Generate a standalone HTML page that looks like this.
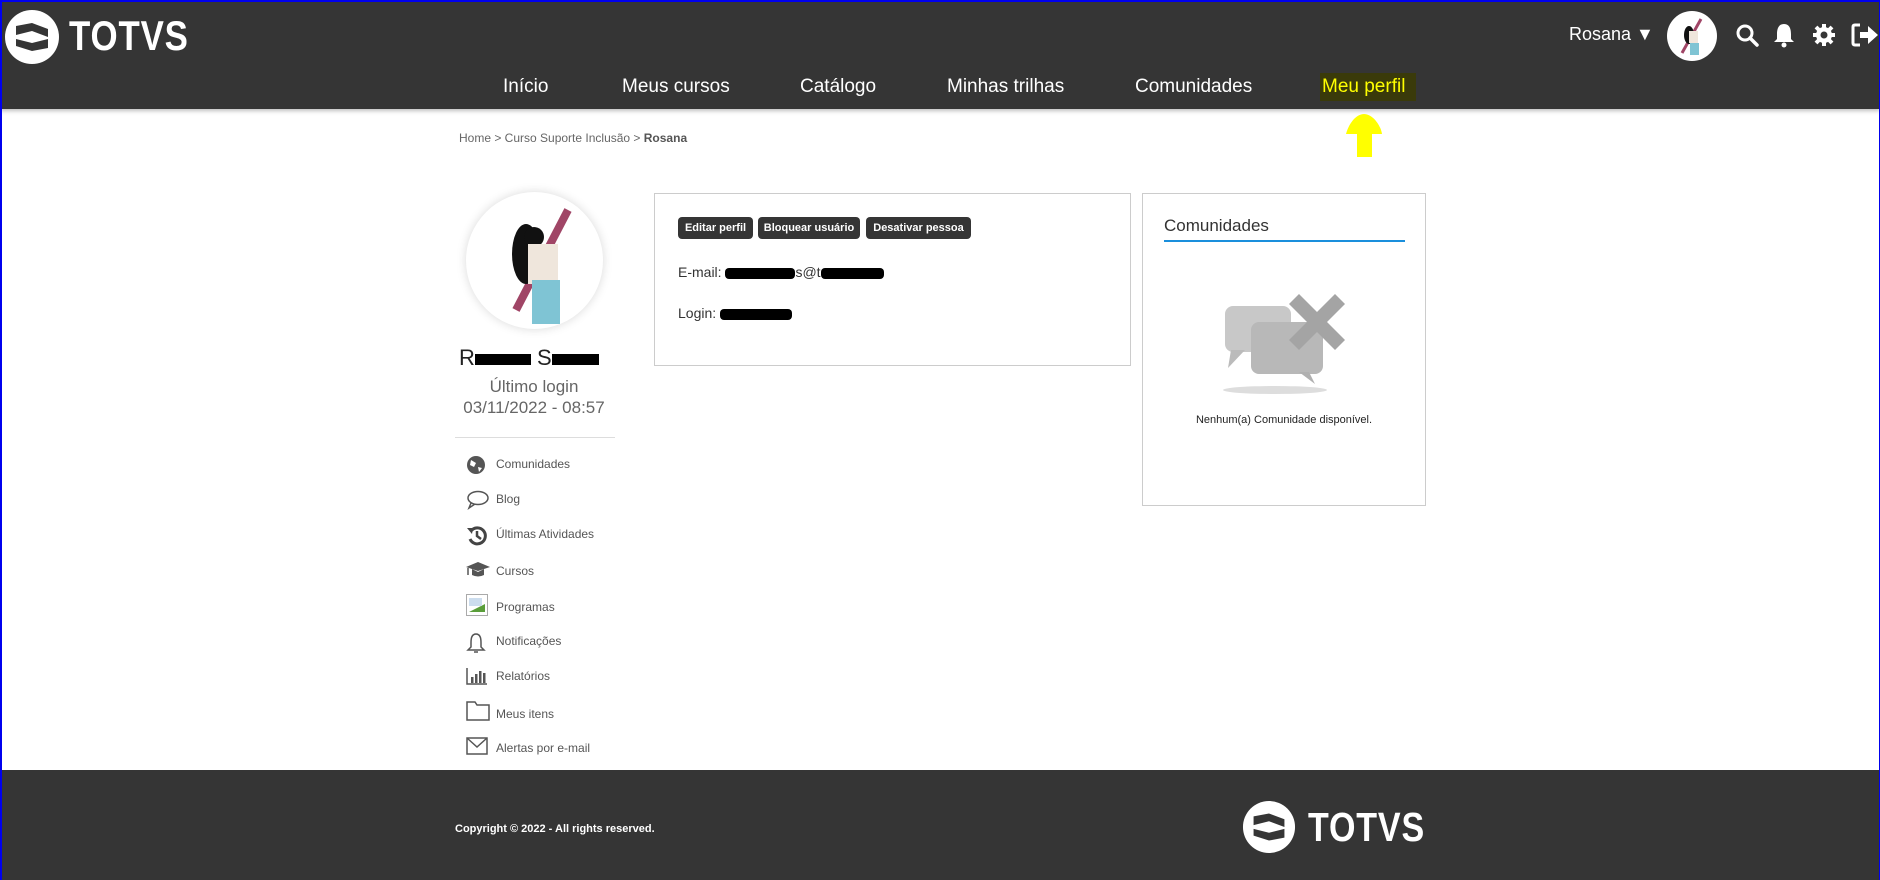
<!DOCTYPE html>
<html><head><meta charset="utf-8"><style>
*{margin:0;padding:0;box-sizing:border-box}
body{width:1880px;height:880px;position:relative;overflow:hidden;background:#fff;font-family:"Liberation Sans",Arial,sans-serif}
.abs{position:absolute}
#hdr{left:0;top:0;width:1880px;height:109px;background:#353535;box-shadow:0 2px 4px rgba(0,0,0,.25)}
.nav{top:76px;color:#fff;font-size:19px;white-space:nowrap}
.side{left:466px;font-size:12px;color:#555}
.side span{position:absolute;left:30px;top:2px;white-space:nowrap}
.btn{top:217px;height:22px;background:#353535;color:#fff;font-size:11px;font-weight:bold;border-radius:4px;text-align:center;line-height:22px}
.blk{background:#000;height:11px;border-radius:4px}
.logo{transform:scaleX(0.83);transform-origin:0 0;color:#fff;font-weight:bold;letter-spacing:1px}
</style></head><body>
<div id="hdr" class="abs">
  <svg class="abs" style="left:4px;top:9px" width="56" height="56" viewBox="0 0 56 56"><circle cx="28" cy="28" r="27" fill="#fff"/><path d="M12 17 L28 14 L44 20 L44 28 L28 22 L12 26 Z" fill="#353535"/><path d="M12 30 L28 34 L44 30 L44 39 L28 42 L12 37 Z" fill="#353535"/></svg>
  <div class="abs logo" style="left:69px;top:12px;font-size:42px">TOTVS</div>
  <div class="abs" style="left:1569px;top:24px;color:#fff;font-size:18px">Rosana ▼</div>
  <div class="abs" style="left:1667px;top:11px;width:50px;height:50px;border-radius:50%;background:#fff;overflow:hidden">
    <svg width="50" height="50"><line x1="34" y1="8" x2="15" y2="42" stroke="#a04566" stroke-width="3"/><ellipse cx="22" cy="24" rx="5" ry="9" fill="#111"/><rect x="22" y="20" width="9" height="12" fill="#efe6dc"/><rect x="23" y="32" width="9" height="12" fill="#7fc4d4"/></svg>
  </div>
  <svg class="abs" style="left:1735px;top:23px" width="24" height="24" viewBox="0 0 24 24"><circle cx="10" cy="10" r="7" fill="none" stroke="#fff" stroke-width="3"/><line x1="15" y1="15" x2="22" y2="22" stroke="#fff" stroke-width="3.5" stroke-linecap="round"/></svg>
  <svg class="abs" style="left:1773px;top:22px" width="22" height="26" viewBox="0 0 22 26"><path d="M11 2 C5 2 4 8 4 12 L4 17 L1 20 L21 20 L18 17 L18 12 C18 8 17 2 11 2Z" fill="#fff"/><circle cx="11" cy="23" r="2.5" fill="#fff"/></svg>
  <svg class="abs" style="left:1812px;top:23px" width="24" height="24" viewBox="0 0 24 24"><circle cx="12" cy="12" r="8" fill="#fff"/><g stroke="#fff" stroke-width="4"><line x1="12" y1="1" x2="12" y2="23"/><line x1="1" y1="12" x2="23" y2="12"/><line x1="4" y1="4" x2="20" y2="20"/><line x1="20" y1="4" x2="4" y2="20"/></g><circle cx="12" cy="12" r="3.5" fill="#353535"/></svg>
  <svg class="abs" style="left:1851px;top:23px" width="28" height="24" viewBox="0 0 28 24"><path d="M9 2 L4 2 Q2 2 2 4 L2 20 Q2 22 4 22 L9 22" fill="none" stroke="#fff" stroke-width="3"/><path d="M9 9 L17 9 L17 3 L27 12 L17 21 L17 15 L9 15Z" fill="#fff"/></svg>
  <div class="abs nav" style="left:503px">Início</div>
  <div class="abs nav" style="left:622px">Meus cursos</div>
  <div class="abs nav" style="left:800px">Catálogo</div>
  <div class="abs nav" style="left:947px">Minhas trilhas</div>
  <div class="abs nav" style="left:1135px">Comunidades</div>
  <div class="abs" style="left:1320px;top:73px;width:96px;height:28px;background:#3a3a0a"></div>
  <div class="abs nav" style="left:1322px;color:#ffff00">Meu perfil</div>
</div>
<svg class="abs" style="left:1345px;top:112px" width="38" height="46" viewBox="0 0 38 46"><path d="M19 2 C28 2 36 14 37 22 L27 22 L27 45 L12 45 L12 22 L1 22 C3 14 10 2 19 2Z" fill="#ffff00"/></svg>
<div class="abs" style="left:459px;top:131px;font-size:12px;color:#666">Home &gt; Curso Suporte Inclusão &gt; <b style="color:#555">Rosana</b></div>
<div class="abs" style="left:466px;top:192px;width:137px;height:137px;border-radius:50%;background:#fff;box-shadow:0 0 10px rgba(0,0,0,.15);overflow:hidden">
  <svg width="137" height="137"><line x1="102" y1="18" x2="50" y2="118" stroke="#a04566" stroke-width="8"/><ellipse cx="60" cy="62" rx="14" ry="30" fill="#111"/><circle cx="68" cy="45" r="10" fill="#111"/><rect x="62" y="52" width="30" height="40" fill="#efe6dc"/><rect x="66" y="88" width="28" height="44" fill="#7fc4d4"/></svg>
</div>
<div class="abs" style="left:459px;top:345px;font-size:22px;color:#222">R<span style="display:inline-block;width:56px;height:11px;background:#000;vertical-align:middle"></span> S<span style="display:inline-block;width:47px;height:11px;background:#000;vertical-align:middle"></span></div>
<div class="abs" style="left:454px;top:376px;width:160px;text-align:center;font-size:17px;color:#666;line-height:21px">Último login<br>03/11/2022 - 08:57</div>
<div class="abs" style="left:455px;top:437px;width:160px;height:1px;background:#ddd"></div>
<div class="abs side" style="top:455px"><svg width="20" height="20"><circle cx="10" cy="10" r="9" fill="#555"/><path d="M5 5 L10 8 L8 12 L4 10Z M12 12 L16 13 L13 17Z" fill="#fff"/></svg><span>Comunidades</span></div>
<div class="abs side" style="top:490px"><svg width="24" height="20"><ellipse cx="12" cy="8" rx="10" ry="6.5" fill="none" stroke="#555" stroke-width="1.5"/><path d="M5 13 L3 18 L9 14" fill="none" stroke="#555" stroke-width="1.5"/></svg><span>Blog</span></div>
<div class="abs side" style="top:525px"><svg width="22" height="22"><path d="M5 6 A8 8 0 1 1 4 14" fill="none" stroke="#444" stroke-width="3"/><path d="M1 3 L7 3 L6 9Z" fill="#444"/><path d="M11 6 L11 11 L15 14" stroke="#444" stroke-width="2.5" fill="none"/></svg><span>Últimas Atividades</span></div>
<div class="abs side" style="top:562px"><svg width="24" height="16"><path d="M0 5 L12 0 L24 5 L12 9Z" fill="#555"/><path d="M6 7 L6 13 Q12 16 18 13 L18 7 L12 10Z" fill="#555"/><line x1="2" y1="6" x2="2" y2="13" stroke="#555" stroke-width="1.5"/></svg><span>Cursos</span></div>
<div class="abs side" style="top:594px"><svg width="22" height="22"><rect x=".5" y=".5" width="21" height="21" fill="#fff" stroke="#aaa"/><path d="M3 18 L19 10 L19 18Z" fill="#5a9e3a"/><rect x="3" y="4" width="13" height="8" fill="#cde"/></svg><span style="top:6px">Programas</span></div>
<div class="abs side" style="top:632px"><svg width="20" height="22"><path d="M10 2 C5 2 5 8 5 11 L5 15 L2 18 L18 18 L15 15 L15 11 C15 8 15 2 10 2Z" fill="none" stroke="#555" stroke-width="1.5"/><path d="M8 20 L12 20" stroke="#555" stroke-width="1.5"/></svg><span>Notificações</span></div>
<div class="abs side" style="top:667px"><svg width="22" height="18"><path d="M1 1 L1 17 L21 17" fill="none" stroke="#555" stroke-width="1.5"/><g fill="#555"><rect x="5" y="10" width="2.5" height="6"/><rect x="9" y="7" width="2.5" height="9"/><rect x="13" y="4" width="2.5" height="12"/><rect x="17" y="6" width="2.5" height="10"/></g></svg><span>Relatórios</span></div>
<div class="abs side" style="top:701px"><svg width="24" height="20"><path d="M1 1 L9 1 L11 4 L23 4 L23 19 L1 19Z" fill="none" stroke="#555" stroke-width="1.5"/></svg><span style="top:6px">Meus itens</span></div>
<div class="abs side" style="top:737px"><svg width="22" height="18"><rect x="1" y="1" width="20" height="16" fill="none" stroke="#555" stroke-width="1.5"/><path d="M1 1 L11 10 L21 1" fill="none" stroke="#555" stroke-width="1.5"/></svg><span style="top:4px">Alertas por e-mail</span></div>

<div class="abs" style="left:654px;top:193px;width:477px;height:173px;border:1px solid #ccc"></div>
<div class="abs btn" style="left:678px;width:75px">Editar perfil</div>
<div class="abs btn" style="left:758px;width:102px">Bloquear usuário</div>
<div class="abs btn" style="left:866px;width:105px">Desativar pessoa</div>
<div class="abs" style="left:678px;top:264px;font-size:14px;color:#333">E-mail: <span class="blk" style="display:inline-block;width:70px;vertical-align:middle"></span>s@t<span class="blk" style="display:inline-block;width:63px;vertical-align:middle"></span></div>
<div class="abs" style="left:678px;top:305px;font-size:14px;color:#333">Login: <span class="blk" style="display:inline-block;width:72px;vertical-align:middle"></span></div>

<div class="abs" style="left:1142px;top:193px;width:284px;height:313px;border:1px solid #ccc"></div>
<div class="abs" style="left:1164px;top:216px;font-size:17px;color:#333">Comunidades</div>
<div class="abs" style="left:1164px;top:240px;width:241px;height:2px;background:#1a8fdc"></div>
<svg class="abs" style="left:1223px;top:294px" width="124" height="102" viewBox="0 0 124 102"><ellipse cx="52" cy="96" rx="52" ry="4" fill="#ddd"/><rect x="2" y="12" width="66" height="46" rx="8" fill="#c8c8c8"/><path d="M8 56 L5 74 L22 56Z" fill="#bbb"/><rect x="28" y="28" width="72" height="52" rx="8" fill="#b8b8b8"/><path d="M86 78 L92 90 L76 78Z" fill="#b0b0b0"/><path d="M76 0 L94 18 L112 0 L122 10 L104 28 L122 46 L112 56 L94 38 L76 56 L66 46 L84 28 L66 10Z" fill="#a4a4a4"/></svg>
<div class="abs" style="left:1142px;top:414px;width:284px;text-align:center;font-size:11px;color:#222">Nenhum(a) Comunidade disponível.</div>

<div class="abs" style="left:0;top:770px;width:1880px;height:110px;background:#353535"></div>
<div class="abs" style="left:455px;top:823px;font-size:11px;font-weight:bold;color:#fff">Copyright © 2022 - All rights reserved.</div>
<svg class="abs" style="left:1242px;top:800px" width="54" height="54" viewBox="0 0 56 56"><circle cx="28" cy="28" r="27" fill="#fff"/><path d="M12 17 L28 14 L44 20 L44 28 L28 22 L12 26 Z" fill="#353535"/><path d="M12 30 L28 34 L44 30 L44 39 L28 42 L12 37 Z" fill="#353535"/></svg>
<div class="abs logo" style="left:1308px;top:804px;font-size:41px">TOTVS</div>
<div class="abs" style="left:0;top:0;width:1880px;height:2px;background:#0000ee"></div>
<div class="abs" style="left:0;top:0;width:2px;height:880px;background:#0000ee"></div>
<div class="abs" style="left:1879px;top:0;width:1px;height:880px;background:#0000ee"></div>
</body></html>
